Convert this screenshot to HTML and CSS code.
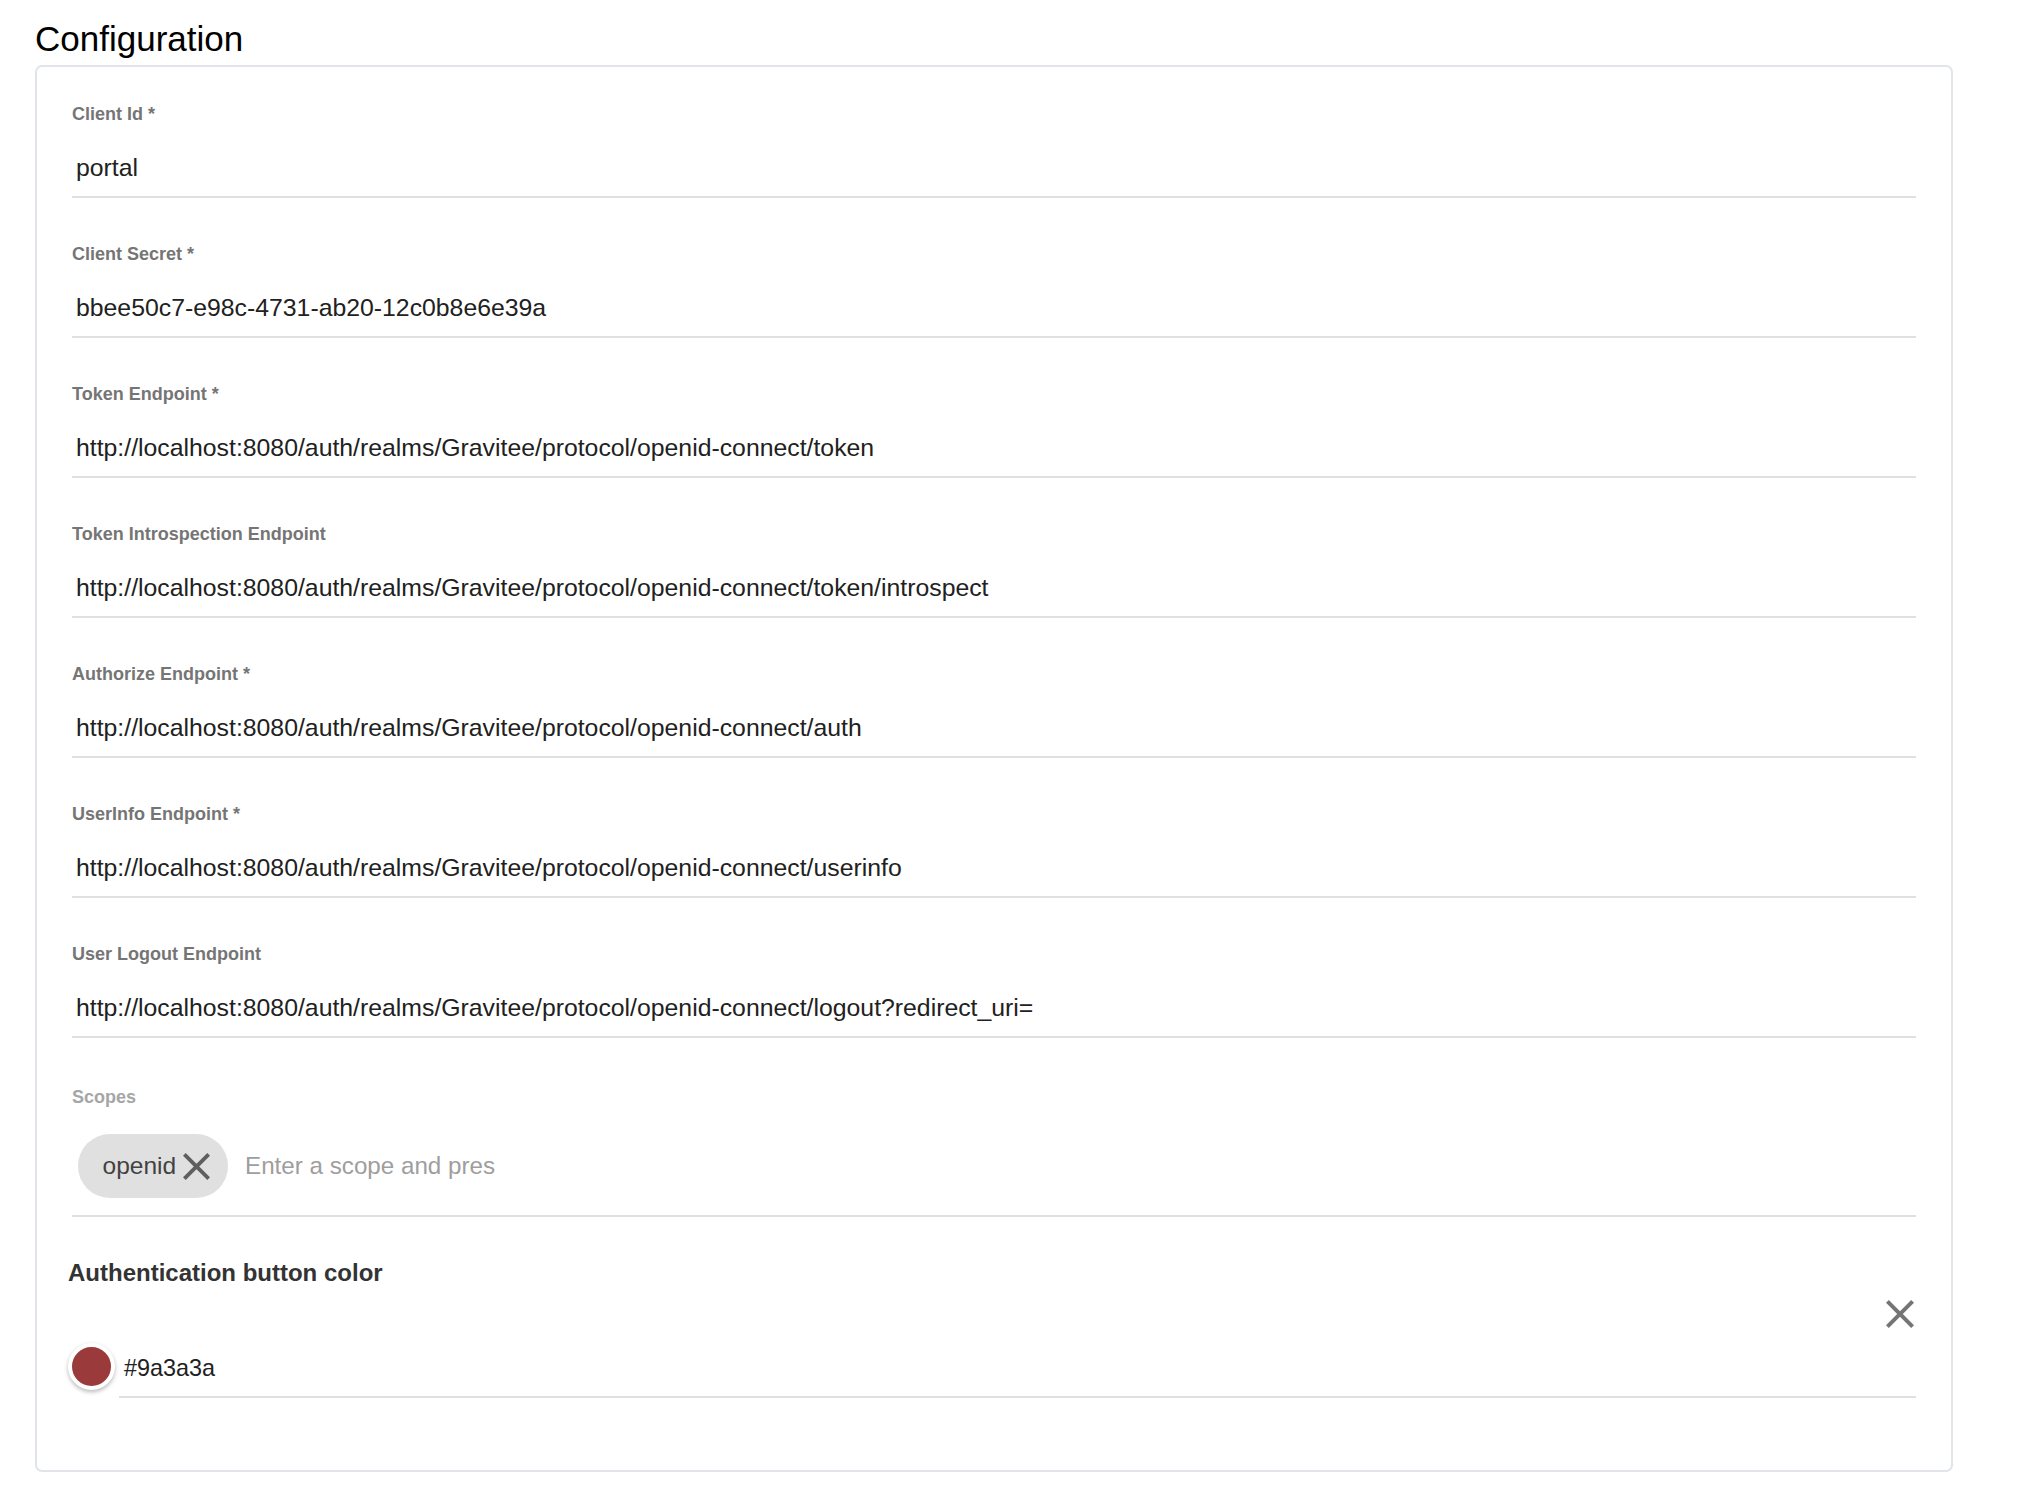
FILE: index.html
```html
<!DOCTYPE html>
<html>
<head>
<meta charset="utf-8">
<title>Configuration</title>
<link rel="stylesheet" href="styles.css">
</head>
<body>
<div class="page">
  <h2 class="title">Configuration</h2>
  <div class="card">
    <div class="field">
      <div class="label">Client Id *</div>
      <div class="control">portal</div>
    </div>
    <div class="field">
      <div class="label">Client Secret *</div>
      <div class="control">bbee50c7-e98c-4731-ab20-12c0b8e6e39a</div>
    </div>
    <div class="field">
      <div class="label">Token Endpoint *</div>
      <div class="control">http://localhost:8080/auth/realms/Gravitee/protocol/openid-connect/token</div>
    </div>
    <div class="field">
      <div class="label">Token Introspection Endpoint</div>
      <div class="control">http://localhost:8080/auth/realms/Gravitee/protocol/openid-connect/token/introspect</div>
    </div>
    <div class="field">
      <div class="label">Authorize Endpoint *</div>
      <div class="control">http://localhost:8080/auth/realms/Gravitee/protocol/openid-connect/auth</div>
    </div>
    <div class="field">
      <div class="label">UserInfo Endpoint *</div>
      <div class="control">http://localhost:8080/auth/realms/Gravitee/protocol/openid-connect/userinfo</div>
    </div>
    <div class="field">
      <div class="label">User Logout Endpoint</div>
      <div class="control">http://localhost:8080/auth/realms/Gravitee/protocol/openid-connect/logout?redirect_uri=</div>
    </div>
    <div class="field scopes">
      <div class="label light">Scopes</div>
      <div class="chip-control">
        <span class="chip">
          <span class="chip-text">openid</span>
          <svg class="chip-x" viewBox="5 5 14 14" width="27" height="27"><path d="M19 6.41L17.59 5 12 10.59 6.41 5 5 6.41 10.59 12 5 17.59 6.41 19 12 13.41 17.59 19 19 17.59 13.41 12z"/></svg>
        </span>
        <span class="placeholder">Enter a scope and pres</span>
      </div>
    </div>
    <div class="color-section">
      <div class="color-heading">Authentication button color</div>
      <div class="color-row">
        <span class="swatch"></span>
        <div class="color-field">
          <div class="clear-row">
            <svg class="clear-x" viewBox="5 5 14 14" width="28" height="28"><path d="M19 6.41L17.59 5 12 10.59 6.41 5 5 6.41 10.59 12 5 17.59 6.41 19 12 13.41 17.59 19 19 17.59 13.41 12z"/></svg>
          </div>
          <div class="color-value">#9a3a3a</div>
        </div>
      </div>
    </div>
  </div>
</div>
</body>
</html>
```
FILE: styles.css
```css
html, body {
  margin: 0;
  padding: 0;
  background: #ffffff;
}

body {
  font-family: "Liberation Sans", Arial, Helvetica, sans-serif;
  color: #212121;
}

.page {
  padding: 19px 65px 0 35px;
}

.title {
  margin: 0 0 6px 0;
  font-size: 35px;
  line-height: 40px;
  font-weight: 400;
  color: #000000;
}

.card {
  border: 2px solid #e1e5e9;
  border-radius: 7px;
  padding: 36px 35px 34px 35px;
}

.field {
  margin-bottom: 45px;
}

.label {
  font-size: 18px;
  line-height: 22px;
  font-weight: 700;
  color: #757575;
}

.label.light {
  color: #a6a6a6;
}

.control {
  margin-top: 27.5px;
  padding: 0 0 13.5px 4px;
  border-bottom: 2px solid #e0e0e0;
  font-size: 24.8px;
  line-height: 30px;
  color: #212121;
  white-space: nowrap;
}

.scopes {
  padding-top: 3px;
  margin-bottom: 42px;
}

.chip-control {
  margin-top: 26px;
  padding: 0 0 17px 6px;
  border-bottom: 2px solid #e0e0e0;
  display: flex;
  align-items: center;
}

.chip {
  display: inline-flex;
  align-items: center;
  box-sizing: border-box;
  height: 64px;
  width: 150px;
  padding: 0 0 0 24.5px;
  border-radius: 32px;
  background: #e0e0e0;
}

.chip-text {
  font-size: 24.5px;
  line-height: 30px;
  color: #424242;
}

.chip-x {
  margin-left: 7px;
  fill: #5f5f5f;
}

.placeholder {
  margin-left: 17px;
  font-size: 24.2px;
  line-height: 30px;
  color: #9e9e9e;
}

.color-section {
  margin-left: -4px;
  margin-bottom: 38px;
}

.color-heading {
  font-size: 24px;
  line-height: 28px;
  font-weight: 700;
  color: #333333;
}

.color-row {
  display: flex;
  align-items: flex-end;
  margin-top: 13.4px;
}

.swatch {
  flex: none;
  box-sizing: border-box;
  width: 47px;
  height: 47px;
  margin-bottom: 8.5px;
  border-radius: 50%;
  border: 4px solid #ffffff;
  background: #9a3a3a;
  box-shadow: 0 2px 4px rgba(0, 0, 0, 0.28);
}

.color-field {
  flex: 1;
  margin-left: 4px;
  border-bottom: 2px solid #e0e0e0;
  padding-bottom: 13.5px;
}

.clear-row {
  display: flex;
  justify-content: flex-end;
  padding-right: 2px;
  height: 28px;
}

.clear-x {
  fill: #757575;
}

.color-value {
  margin-top: 24.5px;
  padding-left: 5px;
  font-size: 23.4px;
  line-height: 30px;
  color: #212121;
}
```
